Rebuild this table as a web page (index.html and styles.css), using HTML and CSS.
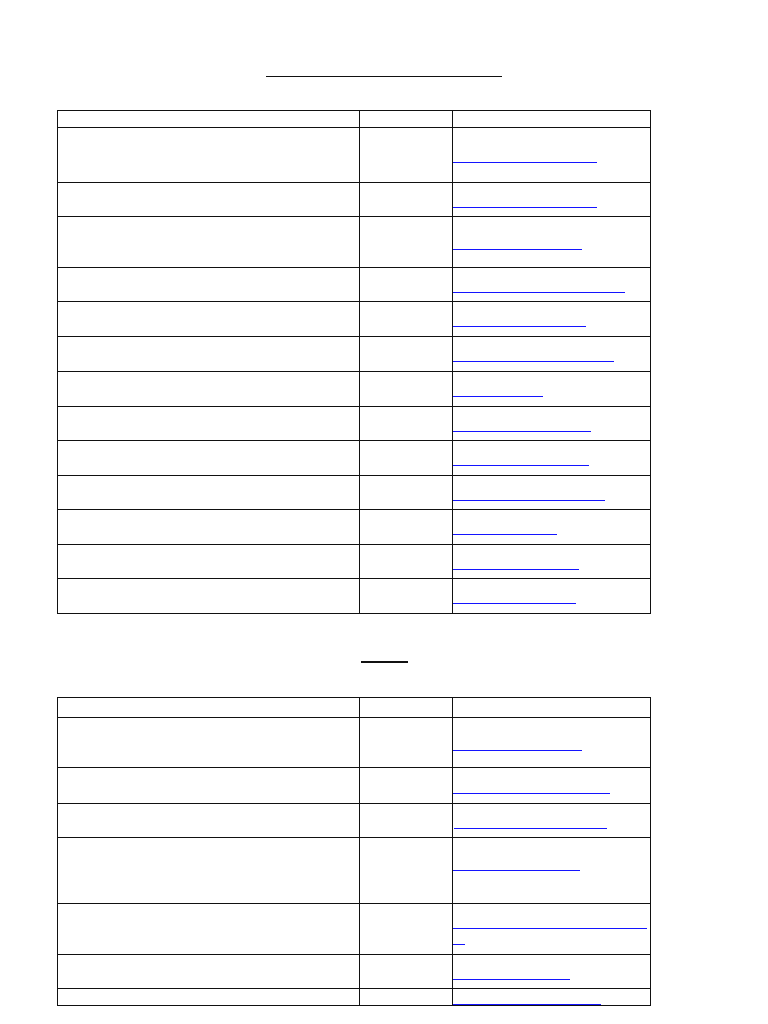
FILE: index.html
```html
<!DOCTYPE html>
<html lang="en">
<head>
<meta charset="utf-8">
<title>Publications and Talks</title>
<link rel="stylesheet" href="styles.css">
</head>
<body>
<main class="page">
  <section class="sec sec-pubs">
    <h1 class="heading heading-main">Selected Publications</h1>
    <table class="list">
      <colgroup><col class="c-title"><col class="c-date"><col class="c-link"></colgroup>
      <thead>
        <tr class="h17"><th>Title</th><th>Date</th><th>Link</th></tr>
      </thead>
      <tbody>
        <tr class="h55"><td>Distributed indexing of large document collections</td><td>2019</td><td><a class="lnk w144" href="#">Full text (PDF)</a></td></tr>
        <tr class="h34"><td>Query planning for federated search engines</td><td>2018</td><td><a class="lnk w144" href="#">Full text (PDF)</a></td></tr>
        <tr class="h51"><td>A survey of ranking functions for web retrieval</td><td>2018</td><td><a class="lnk w129" href="#">Full text (PDF)</a></td></tr>
        <tr class="h34"><td>Compression of inverted files</td><td>2017</td><td><a class="lnk w172" href="#">Technical report</a></td></tr>
        <tr class="h35"><td>Caching strategies for search result pages</td><td>2017</td><td><a class="lnk w133" href="#">Technical report</a></td></tr>
        <tr class="h35"><td>Evaluation of relevance feedback methods</td><td>2016</td><td><a class="lnk w161" href="#">Technical report</a></td></tr>
        <tr class="h35"><td>Duplicate detection in crawled pages</td><td>2016</td><td><a class="lnk w90" href="#">Report</a></td></tr>
        <tr class="h34"><td>Link analysis on the university web graph</td><td>2015</td><td><a class="lnk w138" href="#">Technical report</a></td></tr>
        <tr class="h35"><td>Language models for passage retrieval</td><td>2015</td><td><a class="lnk w136" href="#">Technical report</a></td></tr>
        <tr class="h34"><td>Efficient top-k query processing</td><td>2014</td><td><a class="lnk w152" href="#">Technical report</a></td></tr>
        <tr class="h35"><td>Snippet generation for result lists</td><td>2014</td><td><a class="lnk w104" href="#">Full text</a></td></tr>
        <tr class="h34"><td>Crawling policies and freshness</td><td>2013</td><td><a class="lnk w126" href="#">Full text (PDF)</a></td></tr>
        <tr class="h35"><td>Static index pruning revisited</td><td>2013</td><td><a class="lnk w123" href="#">Full text (PDF)</a></td></tr>
      </tbody>
    </table>
  </section>

  <section class="sec sec-talks">
    <h2 class="heading heading-sub">Talks</h2>
    <table class="list list-talks">
      <colgroup><col class="c-title"><col class="c-date"><col class="c-link"></colgroup>
      <thead>
        <tr class="h20"><th>Title</th><th>Date</th><th>Slides</th></tr>
      </thead>
      <tbody>
        <tr class="h50"><td>Scaling search infrastructure</td><td>2019</td><td><a class="lnk w129" href="#">Slides (PDF)</a></td></tr>
        <tr class="h36"><td>Learning to rank in practice</td><td>2018</td><td><a class="lnk w157" href="#">Slides (PDF)</a></td></tr>
        <tr class="h34"><td>Open source retrieval toolkits</td><td>2018</td><td><a class="lnk lnk-in w153" href="#">Slides (PDF)</a></td></tr>
        <tr class="h66"><td>Index structures for modern hardware</td><td>2017</td><td><a class="lnk w127" href="#">Slides (PDF)</a><span class="note">keynote</span></td></tr>
        <tr class="h51"><td>Query logs and user behaviour</td><td>2016</td><td><a class="lnk-wrap" href="#"><span class="lnk w194">Slides and recorded video (PDF</span><span class="lnk w12">)</span></a></td></tr>
        <tr class="h34"><td>Evaluation campaigns</td><td>2015</td><td><a class="lnk w117" href="#">Slides (PDF)</a></td></tr>
        <tr class="h17"><td>Search engine architecture</td><td>2014</td><td><a class="lnk w148" href="#">Slides (PDF)</a></td></tr>
      </tbody>
    </table>
  </section>
</main>
</body>
</html>
```

FILE: styles.css
```css
html, body {
  margin: 0;
  padding: 0;
  background: #ffffff;
}

body {
  font-family: "Liberation Sans", Arial, sans-serif;
  font-size: 13px;
  line-height: 16px;
  color: transparent;
}

.page {
  width: 768px;
}

.sec-pubs {
  padding-top: 61px;
}

.sec-talks {
  padding-top: 33px;
}

.heading {
  display: block;
  box-sizing: border-box;
  margin: 0 auto;
  height: 16px;
  font-size: 13px;
  line-height: 14px;
  white-space: nowrap;
  text-align: center;
  color: transparent;
}

.heading-main {
  width: 236px;
  font-weight: normal;
  border-bottom: 1px solid #111111;
}

.heading-sub {
  width: 47px;
  font-weight: bold;
  border-bottom: 2px solid #111111;
  line-height: 13px;
}

.list {
  margin-left: 57px;
  margin-top: 33px;
  width: 593px;
  table-layout: fixed;
  border-collapse: collapse;
}

.list-talks {
  margin-top: 34px;
}

.c-title { width: 302px; }
.c-date { width: 93px; }
.c-link { width: 198px; }

.list th,
.list td {
  border: 1px solid #111111;
  padding: 0;
  vertical-align: middle;
  text-align: left;
  font-weight: normal;
  overflow: hidden;
}

.h17 { height: 17px; }
.h20 { height: 20px; }
.h34 { height: 34px; }
.h35 { height: 35px; }
.h36 { height: 36px; }
.h50 { height: 50px; }
.h51 { height: 51px; }
.h55 { height: 55px; }
.h66 { height: 66px; }

.lnk {
  display: block;
  box-sizing: border-box;
  height: 16px;
  line-height: 15px;
  white-space: nowrap;
  color: transparent;
  text-decoration: none;
  border-bottom: 1px solid #1414ff;
}

.lnk-in {
  margin-left: 1px;
}

.lnk-wrap {
  display: block;
  color: transparent;
  text-decoration: none;
}

.note {
  display: block;
  height: 16px;
}

.w12 { width: 12px; }
.w90 { width: 90px; }
.w104 { width: 104px; }
.w117 { width: 117px; }
.w123 { width: 123px; }
.w126 { width: 126px; }
.w127 { width: 127px; }
.w129 { width: 129px; }
.w133 { width: 133px; }
.w136 { width: 136px; }
.w138 { width: 138px; }
.w144 { width: 144px; }
.w148 { width: 148px; }
.w152 { width: 152px; }
.w153 { width: 153px; }
.w157 { width: 157px; }
.w161 { width: 161px; }
.w172 { width: 172px; }
.w194 { width: 194px; }
```
